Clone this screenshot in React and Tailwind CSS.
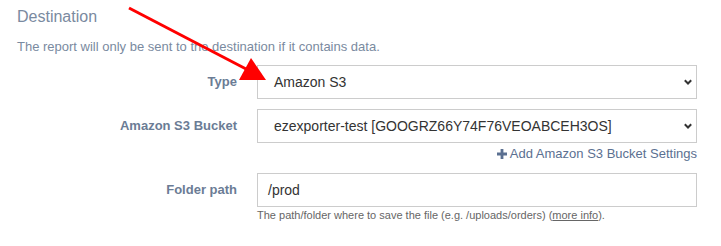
import React from 'react';

const font = { fontFamily: '"Liberation Sans", Arial, sans-serif' };

const Chevron = () => (
  <svg width="10" height="7" viewBox="0 0 10 7" className="absolute right-[4px] top-1/2 -translate-y-1/2 pointer-events-none">
    <path d="M1.8 1.8 L5 5 L8.2 1.8" fill="none" stroke="#333" strokeWidth="2" />
  </svg>
);

const Select = ({ value }) => (
  <div className="relative w-[440px]">
    <div className="h-[34px] border border-[#cccccc] bg-white pl-[16px] flex items-center text-[14px] text-[#333333]">
      {value}
    </div>
    <Chevron />
  </div>
);

const Row = ({ label, children, className = '' }) => (
  <div className={`flex items-start ${className}`}>
    <div className="w-[237px] text-right text-[13px] font-bold text-[#6b7c95] h-[34px] flex items-center justify-end">
      {label}
    </div>
    <div className="ml-[20px]">{children}</div>
  </div>
);

export default function App() {
  return (
    <div className="relative w-[721px] h-[246px] bg-white overflow-hidden" style={font}>
      <div className="pl-[17px] pt-[6px]">
        <h3 className="text-[16px] leading-[22px] text-[#7a8aa0]">Destination</h3>
        <p className="mt-[11px] text-[13px] leading-[16px] text-[#7a8aa0]">
          The report will only be sent to the destination if it contains data.
        </p>
      </div>

      <div className="mt-[10px]">
        <Row label="Type">
          <Select value="Amazon S3" />
        </Row>
        <Row label="Amazon S3 Bucket" className="mt-[10px]">
          <Select value="ezexporter-test [GOOGRZ66Y74F76VEOABCEH3OS]" />
          <div className="flex justify-end items-center mt-[3px] text-[13px] leading-[16px] text-[#5b7091]">
            <svg width="10" height="10" viewBox="0 0 10 10" className="mr-[3px]">
              <path d="M3.6 0h2.8v3.6H10v2.8H6.4V10H3.6V6.4H0V3.6h3.6z" fill="#5b7091" />
            </svg>
            Add Amazon S3 Bucket Settings
          </div>
        </Row>
        <Row label="Folder path" className="mt-[11px]">
          <div
            className="w-[440px] h-[34px] border border-[#cccccc] bg-white pl-[10px] flex items-center text-[14px] text-[#333333]"
            style={{ fontFamily: '"Liberation Sans Narrow", "Liberation Sans", Arial, sans-serif' }}
          >
            /prod
          </div>
          <p
            className="mt-[1px] text-[11px] leading-[14px] text-[#666666]"
            style={{ fontFamily: '"Liberation Sans Narrow", "Liberation Sans", Arial, sans-serif' }}
          >
            The path/folder where to save the file (e.g. /uploads/orders) (<span className="underline">more info</span>).
          </p>
        </Row>
      </div>

      <svg className="absolute left-0 top-0 pointer-events-none" width="721" height="246" viewBox="0 0 721 246">
        <line x1="129" y1="8" x2="248" y2="70" stroke="#ff0000" strokeWidth="3" />
        <polygon points="266,80 239,80 251,58" fill="#ff0000" />
      </svg>
    </div>
  );
}
